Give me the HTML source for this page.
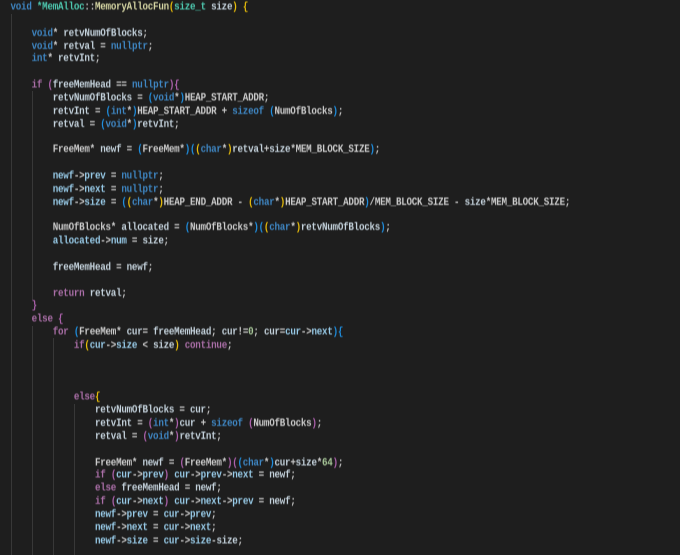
<!DOCTYPE html>
<html><head><meta charset="utf-8">
<style>
html,body{margin:0;padding:0;background:#1e1e1e;width:680px;height:555px;overflow:hidden}
pre{position:absolute;left:10.5px;top:1px;margin:0;font-family:"Liberation Mono",monospace;font-size:9.2px;letter-spacing:-.235px;line-height:10.85px;color:#cccccc;font-weight:bold;transform-origin:0 0;transform:scaleY(1.2);filter:blur(.35px);white-space:pre}
i{font-style:normal}
.k{color:#3f87c4}.c{color:#ab6fa8}.v{color:#98cbe8}.f{color:#d6d6a4}.t{color:#4ec9b0}
.g{color:#e8bd0a}.p{color:#ad62ad}.b{color:#1f8fe0}.n{color:#a9c99a}
.w{color:#c4d2dc}
u{position:absolute;width:1px;background:#383838;display:block}
</style></head><body>
<u style="left:11px;top:14px;height:541px"></u>
<u style="left:32px;top:91px;height:209px"></u>
<u style="left:32px;top:326px;height:229px"></u>
<u style="left:53px;top:338px;height:217px"></u>
<u style="left:74px;top:404px;height:151px"></u>
<pre><i class="k">void</i> <i class="t">*MemAlloc</i>::<i class="f">MemoryAllocFun</i><i class="g">(</i><i class="t">size_t</i> <i class="w">size</i><i class="g">)</i> <i class="g">{</i>

    <i class="k">void</i>* <i class="w">retvNumOfBlocks</i>;
    <i class="k">void</i>* <i class="w">retval</i> = <i class="k">nullptr</i>;
    <i class="k">int</i>* <i class="w">retvInt</i>;

    <i class="c">if</i> <i class="p">(</i><i class="w">freeMemHead</i> == <i class="k">nullptr</i><i class="p">){</i>
        <i class="w">retvNumOfBlocks</i> = <i class="b">(</i><i class="k">void</i>*<i class="b">)</i>HEAP_START_ADDR;
        <i class="w">retvInt</i> = <i class="b">(</i><i class="k">int</i>*<i class="b">)</i>HEAP_START_ADDR + <i class="k">sizeof</i> <i class="b">(</i>NumOfBlocks<i class="b">)</i>;
        <i class="w">retval</i> = <i class="b">(</i><i class="k">void</i>*<i class="b">)</i><i class="w">retvInt</i>;

        FreeMem* <i class="w">newf</i> = <i class="b">(</i>FreeMem*<i class="b">)</i><i class="b">(</i><i class="g">(</i><i class="k">char</i>*<i class="g">)</i><i class="w">retval</i>+<i class="w">size</i>*MEM_BLOCK_SIZE<i class="b">)</i>;

        <i class="v">newf</i>-&gt;<i class="v">prev</i> = <i class="k">nullptr</i>;
        <i class="v">newf</i>-&gt;<i class="v">next</i> = <i class="k">nullptr</i>;
        <i class="v">newf</i>-&gt;<i class="v">size</i> = <i class="b">(</i><i class="g">(</i><i class="k">char</i>*<i class="g">)</i>HEAP_END_ADDR - <i class="g">(</i><i class="k">char</i>*<i class="g">)</i>HEAP_START_ADDR<i class="b">)</i>/MEM_BLOCK_SIZE - <i class="w">size</i>*MEM_BLOCK_SIZE;

        NumOfBlocks* <i class="w">allocated</i> = <i class="b">(</i>NumOfBlocks*<i class="b">)</i><i class="b">(</i><i class="g">(</i><i class="k">char</i>*<i class="g">)</i><i class="w">retvNumOfBlocks</i><i class="b">)</i>;
        <i class="v">allocated</i>-&gt;<i class="v">num</i> = <i class="w">size</i>;

        <i class="w">freeMemHead</i> = <i class="w">newf</i>;

        <i class="c">return</i> <i class="w">retval</i>;
    <i class="p">}</i>
    <i class="c">else</i> <i class="p">{</i>
        <i class="c">for</i> <i class="b">(</i>FreeMem* <i class="w">cur</i>= <i class="w">freeMemHead</i>; <i class="w">cur</i>!=<i class="n">0</i>; <i class="w">cur</i>=<i class="v">cur</i>-&gt;<i class="v">next</i><i class="b">){</i>
            <i class="c">if</i><i class="g">(</i><i class="v">cur</i>-&gt;<i class="v">size</i> &lt; <i class="w">size</i><i class="g">)</i> <i class="c">continue</i>;



            <i class="c">else</i><i class="g">{</i>
                <i class="w">retvNumOfBlocks</i> = <i class="w">cur</i>;
                <i class="w">retvInt</i> = <i class="p">(</i><i class="k">int</i>*<i class="p">)</i><i class="w">cur</i> + <i class="k">sizeof</i> <i class="p">(</i>NumOfBlocks<i class="p">)</i>;
                <i class="w">retval</i> = <i class="p">(</i><i class="k">void</i>*<i class="p">)</i><i class="w">retvInt</i>;

                FreeMem* <i class="w">newf</i> = <i class="p">(</i>FreeMem*<i class="p">)</i><i class="p">(</i><i class="b">(</i><i class="k">char</i>*<i class="b">)</i><i class="w">cur</i>+<i class="w">size</i>*<i class="n">64</i><i class="p">)</i>;
                <i class="c">if</i> <i class="p">(</i><i class="v">cur</i>-&gt;<i class="v">prev</i><i class="p">)</i> <i class="v">cur</i>-&gt;<i class="v">prev</i>-&gt;<i class="v">next</i> = <i class="w">newf</i>;
                <i class="c">else</i> <i class="w">freeMemHead</i> = <i class="w">newf</i>;
                <i class="c">if</i> <i class="p">(</i><i class="v">cur</i>-&gt;<i class="v">next</i><i class="p">)</i> <i class="v">cur</i>-&gt;<i class="v">next</i>-&gt;<i class="v">prev</i> = <i class="w">newf</i>;
                <i class="v">newf</i>-&gt;<i class="v">prev</i> = <i class="v">cur</i>-&gt;<i class="v">prev</i>;
                <i class="v">newf</i>-&gt;<i class="v">next</i> = <i class="v">cur</i>-&gt;<i class="v">next</i>;
                <i class="v">newf</i>-&gt;<i class="v">size</i> = <i class="v">cur</i>-&gt;<i class="v">size</i>-<i class="w">size</i>;</pre>
</body></html>
